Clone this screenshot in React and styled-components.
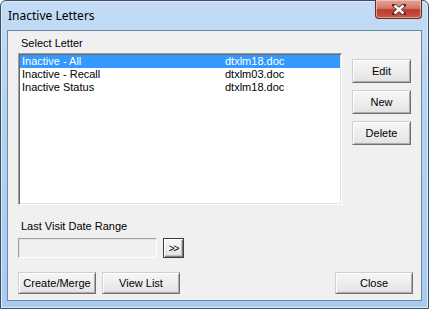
import styled, { createGlobalStyle } from "styled-components";

const GlobalStyle = createGlobalStyle`
    html, body {
        margin: 0;
        padding: 0;
        background: #ffffff;
    }
    * {
        box-sizing: border-box;
    }
`

const Janela = styled.div`
    width: 429px;
    height: 309px;
    display: flex;
    flex-direction: column;
    border: 1px solid #3f4e60;
    border-radius: 6px 6px 0 0;
    background: linear-gradient(180deg, #c4dcf5 0%, #b3d2f2 40%, #a9cbee 100%);
    box-shadow: inset 1px 1px 0 #dcebfa, inset -1px -1px 0 #dcebfa;
`

const BarraTitulo = styled.div`
    height: 29px;
    flex: none;
    display: flex;
    justify-content: space-between;
    align-items: flex-start;
    padding-left: 7px;
    padding-right: 6px;
`

const Titulo = styled.span`
    font-family: "Noto Sans", "Open Sans", sans-serif;
    font-size: 12px;
    color: #000;
    line-height: 29px;
`

const BotaoFechar = styled.div`
    width: 47px;
    height: 19px;
    margin-top: -1px;
    border: 1px solid #6a2a24;
    border-top: none;
    border-radius: 0 0 4px 4px;
    background: linear-gradient(180deg, #e3a498 0%, #d27a6c 45%, #c0392b 55%, #c9574a 100%);
    box-shadow: inset 0 0 0 1px rgba(255, 220, 210, 0.55);
    display: flex;
    align-items: center;
    justify-content: center;
`

const Cliente = styled.div`
    flex: 1;
    margin: 0 6px 7px 6px;
    border: 1px solid #6f88a6;
    background: #f0f0f0;
    display: flex;
    flex-direction: column;
    padding: 6px 8px 6px 10px;
    font-family: "Liberation Sans", Arial, sans-serif;
    font-size: 11px;
    color: #000;
`

const LinhaTopo = styled.div`
    display: flex;
    gap: 10px;
`

const ColunaLista = styled.div`
    display: flex;
    flex-direction: column;
`

const Rotulo = styled.div`
    height: 13px;
    line-height: 13px;
    margin-left: 3px;
    margin-top: ${props => props.$topo || 0}px;
    white-space: nowrap;
`

const Lista = styled.div`
    width: 324px;
    height: 152px;
    margin-top: 3px;
    background: #fff;
    border: 1px solid;
    border-color: #a0a0a0 #ffffff #ffffff #a0a0a0;
    box-shadow: inset 1px 1px 0 #696969, inset -1px -1px 0 #e3e3e3;
    padding: 1px;
`

const ItemLista = styled.div`
    display: grid;
    grid-template-columns: 203px 1fr;
    height: 13px;
    line-height: 13px;
    padding-left: 2px;
    background: ${props => props.$selecionado ? "#3399ff" : "transparent"};
    color: ${props => props.$selecionado ? "#fff" : "#000"};
    white-space: nowrap;
`

const ColunaBotoes = styled.div`
    display: flex;
    flex-direction: column;
    gap: 7px;
    margin-top: 22px;
`

const Botao = styled.button`
    width: ${props => props.$largura}px;
    height: ${props => props.$altura || 24}px;
    padding: 0;
    font-family: "Liberation Sans", Arial, sans-serif;
    font-size: 11px;
    color: #000;
    background: linear-gradient(180deg, #f6f6f6 0%, #eeeeee 50%, #e2e2e2 100%);
    border: 1px solid;
    border-color: #cfcfcf #707070 #707070 #cfcfcf;
    box-shadow: inset 1px 1px 0 #ffffff, inset -1px -1px 0 #ababab;
    border-radius: 0;
`

const BotaoSeta = styled(Botao)`
    border: 1px solid #3c3c3c;
    box-shadow: inset 1px 1px 0 #ffffff, inset -1px -1px 0 #808080, inset -2px -2px 0 #c0c0c0;
    font-size: 10px;
    letter-spacing: -1px;
`

const LinhaData = styled.div`
    display: flex;
    gap: 6px;
    margin-top: 5px;
`

const CampoData = styled.div`
    width: 139px;
    height: 20px;
    background: #f0f0f0;
    border: 1px solid;
    border-color: #a0a0a0 #ffffff #ffffff #a0a0a0;
    box-shadow: inset 1px 1px 0 #e3e3e3;
`

const LinhaBase = styled.div`
    display: flex;
    gap: 6px;
    margin-top: auto;
`

const Espaco = styled.div`
    flex: 1;
`

const cartas = [
    { nome: "Inactive - All", arquivo: "dtxlm18.doc" },
    { nome: "Inactive - Recall", arquivo: "dtxlm03.doc" },
    { nome: "Inactive Status", arquivo: "dtxlm18.doc" },
]

export default function App() {
    return (
        <>
            <GlobalStyle />
            <Janela>
                <BarraTitulo>
                    <Titulo>Inactive Letters</Titulo>
                    <BotaoFechar>
                        <svg width="14" height="11" viewBox="0 0 14 11">
                            <path d="M2 1 L12 10 M12 1 L2 10" stroke="#5a2a24" strokeWidth="4" strokeLinecap="square" />
                            <path d="M2.5 1.5 L11.5 9.5 M11.5 1.5 L2.5 9.5" stroke="#ffffff" strokeWidth="2.4" />
                        </svg>
                    </BotaoFechar>
                </BarraTitulo>
                <Cliente>
                    <LinhaTopo>
                        <ColunaLista>
                            <Rotulo>Select Letter</Rotulo>
                            <Lista>
                                {cartas.map((c, i) => (
                                    <ItemLista key={i} $selecionado={i === 0}>
                                        <span>{c.nome}</span>
                                        <span>{c.arquivo}</span>
                                    </ItemLista>
                                ))}
                            </Lista>
                        </ColunaLista>
                        <ColunaBotoes>
                            <Botao $largura={59}>Edit</Botao>
                            <Botao $largura={59}>New</Botao>
                            <Botao $largura={59}>Delete</Botao>
                        </ColunaBotoes>
                    </LinhaTopo>
                    <Rotulo $topo={15}>Last Visit Date Range</Rotulo>
                    <LinhaData>
                        <CampoData />
                        <BotaoSeta $largura={21} $altura={20}>&gt;&gt;</BotaoSeta>
                    </LinhaData>
                    <LinhaBase>
                        <Botao $largura={78} $altura={22}>Create/Merge</Botao>
                        <Botao $largura={78} $altura={22}>View List</Botao>
                        <Espaco />
                        <Botao $largura={78} $altura={22}>Close</Botao>
                    </LinhaBase>
                </Cliente>
            </Janela>
        </>
    )
}
